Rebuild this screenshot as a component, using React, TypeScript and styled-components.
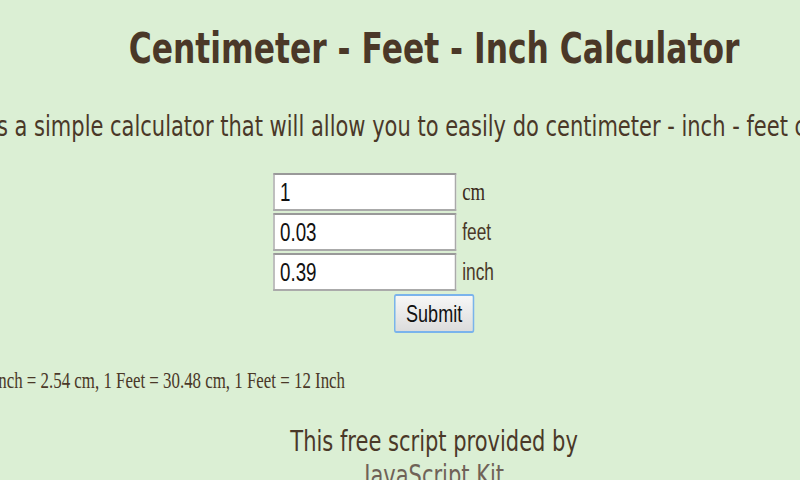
import React from "react";
import styled, { createGlobalStyle } from "styled-components";

const GlobalStyle = createGlobalStyle`
  html, body {
    margin: 0;
    padding: 0;
    background: #dbefd4;
  }
  body {
    width: 800px;
    height: 480px;
    overflow: hidden;
  }
`;

// the shot is a page squeezed sideways, so the whole page is scaled on x
const Page = styled.div`
  width: 1211px;
  margin-left: -20px;
  transform: scaleX(0.75);
  transform-origin: 0 0;
  display: flex;
  flex-direction: column;
  color: #4a3828;
  font-family: "DejaVu Sans", Verdana, sans-serif;
`;

const Title = styled.h1`
  margin: 25px 0 0;
  font-size: 41.8px;
  line-height: 48px;
  font-weight: bold;
  text-align: center;
  white-space: nowrap;
`;

const Intro = styled.p`
  margin: 38px 0 0;
  display: flex;
  justify-content: center;
  font-size: 28px;
  line-height: 32px;
  white-space: nowrap;
`;

const Form = styled.form`
  margin: 30px 0 0;
  align-self: center;
  width: 429px;
  display: grid;
  grid-template-columns: 244px 1fr;
  row-gap: 2px;
  column-gap: 8px;
  align-items: center;
`;

const Field = styled.input`
  box-sizing: border-box;
  width: 244px;
  height: 38px;
  margin: 0;
  padding: 0 7px;
  border: 2px solid #aaaaaa;
  border-top-color: #999999;
  background: #ffffff;
  font-family: "Liberation Sans", Arial, sans-serif;
  font-size: 25px;
  color: #111111;
  outline: none;
`;

const Unit = styled.span<{ $serif?: boolean }>`
  font-family: ${(p) =>
    p.$serif
      ? `"Liberation Serif", "Times New Roman", serif`
      : `"Liberation Sans", Arial, sans-serif`};
  font-size: ${(p) => (p.$serif ? "25px" : "23px")};
  color: ${(p) => (p.$serif ? "#3a2a1c" : "#4a3828")};
`;

const SubmitRow = styled.div`
  grid-column: 1 / span 2;
  display: flex;
  justify-content: center;
  margin-top: 1px;
`;

const SubmitButton = styled.button`
  box-sizing: border-box;
  width: 107px;
  height: 39px;
  padding: 0;
  border: 2px solid #7ab3ec;
  border-radius: 3px;
  background: linear-gradient(#f7f7f7, #dcdcdc);
  font-family: "Liberation Sans", Arial, sans-serif;
  font-size: 24px;
  color: #111111;
`;

const Note = styled.p`
  margin: 35px 0 0;
  font-family: "Liberation Serif", "Times New Roman", serif;
  font-size: 22.5px;
  line-height: 26px;
  white-space: nowrap;
`;

const Credit = styled.p`
  margin: 31px 0 0;
  font-size: 28px;
  line-height: 34px;
  text-align: center;
`;

const KitLink = styled.span`
  color: #6f6257;
`;

export default function App() {
  return (
    <>
      <GlobalStyle />
      <Page>
        <Title>Centimeter - Feet - Inch Calculator</Title>
        <Intro>
          This is a simple calculator that will allow you to easily do centimeter - inch - feet conversions.
        </Intro>
        <Form onSubmit={(e) => e.preventDefault()}>
          <Field defaultValue="1" />
          <Unit $serif>cm</Unit>
          <Field defaultValue="0.03" />
          <Unit>feet</Unit>
          <Field defaultValue="0.39" />
          <Unit>inch</Unit>
          <SubmitRow>
            <SubmitButton type="submit">Submit</SubmitButton>
          </SubmitRow>
        </Form>
        <Note>1 Inch = 2.54 cm, 1 Feet = 30.48 cm, 1 Feet = 12 Inch</Note>
        <Credit>
          This free script provided by
          <br />
          <KitLink>JavaScript Kit</KitLink>
        </Credit>
      </Page>
    </>
  );
}
